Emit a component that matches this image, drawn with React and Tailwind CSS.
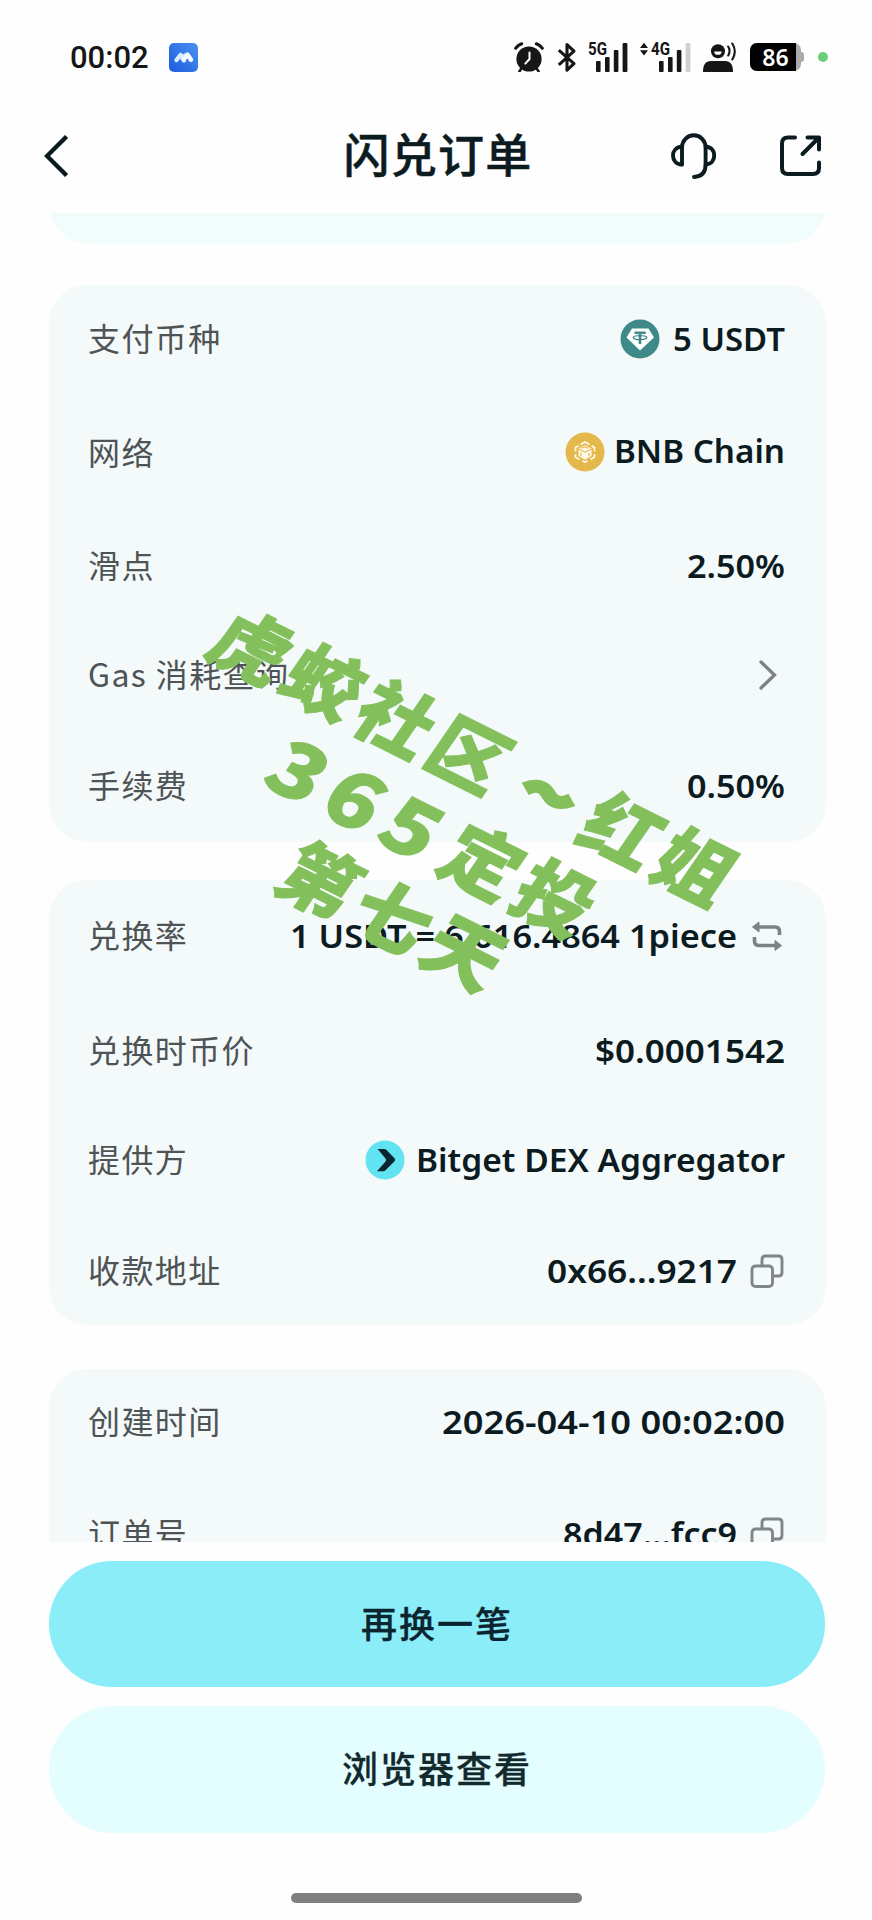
const LATIN = "font-['Noto_Sans','Noto_Sans_CJK_SC',sans-serif]";
const CJK = "font-['Noto_Sans_CJK_SC',sans-serif]";

function AlarmIcon() {
  return (
    <svg className="h-[30px] w-[30px]" viewBox="0 0 30 30" fill="none" stroke="#161616" strokeLinecap="round">
      <circle cx="15" cy="17" r="12.6" fill="#161616" stroke="none" />
      <path d="M1.8 6.2Q4 3 7.6 1.8M28.2 6.2Q26 3 22.4 1.8" strokeWidth="3.2" />
      <path d="M7 27l-1.6 2.4M23 27l1.6 2.4" strokeWidth="2.6" />
      <path d="M15.5 10.5V17l-4.2 4.6" stroke="#fff" strokeWidth="2" />
    </svg>
  );
}

function BluetoothIcon() {
  return (
    <svg className="h-[31px] w-[20px]" viewBox="0 0 20 31" fill="none" stroke="#161616" strokeWidth="3.1" strokeLinejoin="round">
      <path d="M1.8 8.2L17 21.6 10 28.2V2.6l7 6.6L1.8 22.8" />
    </svg>
  );
}

function SignalIcon({ label, arrows, weak }) {
  return (
    <svg className="h-[30px] w-[52px] overflow-visible" viewBox="0 0 52 30" fill="#161616">
      {arrows && <path d="M1 6L5 .8 9 6zM1 8.2h8L5 13.4z" />}
      <text x="12" y="13.4" fontSize="17.500" fontWeight="700" textLength="19" lengthAdjust="spacingAndGlyphs" className="font-['Roboto',sans-serif]">
        {label}
      </text>
      <rect x="20" y="19" width="4.6" height="11" rx="1" />
      <rect x="29" y="15" width="4.6" height="15" rx="1" />
      <rect x="37.8" y="8" width="4.6" height="22" rx="1" />
      <rect x="46.6" y="1" width="4.8" height="29" rx="1" fill={weak ? "#cfcfcf" : "#161616"} />
    </svg>
  );
}

function SpeakerIcon() {
  return (
    <svg className="h-[30px] w-[34px]" viewBox="0 0 34 30" fill="#161616">
      <circle cx="15" cy="9.2" r="7" />
      <path d="M11.2 9.4h7.4a3.7 3.4 0 0 1-7.4 0z" fill="#fff" />
      <path d="M0 30c0-7.600 2.500-11 8-11h14c5.500 0 8 3.400 8 11z" />
      <path d="M25.200 4.500q2.700 4.500 0 9M29.300 1.500q5 7.800 0 16" fill="none" stroke="#161616" strokeWidth="2.100" strokeLinecap="round" />
    </svg>
  );
}

function StatusBar() {
  return (
    <div className="flex h-[114px] items-center pl-[70px]">
      <span className="w-[99px] font-['Roboto',sans-serif] text-[31px] leading-none font-medium text-[#161616]">00:02</span>
      <svg className="h-[29px] w-[29px]" viewBox="0 0 29 29">
        <defs>
          <linearGradient id="appTile" x1="0" y1="1" x2="1" y2="0">
            <stop offset="0" stopColor="#1d5be0" />
            <stop offset="1" stopColor="#4a92ee" />
          </linearGradient>
        </defs>
        <rect width="29" height="29" rx="5" fill="url(#appTile)" />
        <path d="M7.500 17L11.500 12l3.500 5.500M13 14.500l5.500-3 3.500 5.500" fill="none" stroke="#dcebff" strokeWidth="4.400" strokeLinecap="round" strokeLinejoin="round" />
        <path d="M14.800 16.500l3.700-4.500 3.500 4.500" fill="none" stroke="#f6fbff" strokeWidth="4" strokeLinecap="round" strokeLinejoin="round" />
      </svg>
      <div className="ml-[316px] flex items-center">
        <AlarmIcon />
        <div className="ml-[13px]"><BluetoothIcon /></div>
        <div className="-ml-[1px]"><SignalIcon label="5G" /></div>
        <div className="ml-[11px]"><SignalIcon label="4G" arrows weak /></div>
        <div className="ml-[12px]"><SpeakerIcon /></div>
        <div className="ml-[13px] flex items-center">
          <div className="flex h-[28px] w-[51px] rounded-[7px] bg-[#aaaaaa]">
            <div className="flex h-full w-[46px] items-center justify-center rounded-l-[7px] bg-black pl-[5px] font-['Noto_Sans',sans-serif] text-[23px] leading-[28px] font-semibold text-white">86</div>
          </div>
          <div className="h-[10px] w-[3px] rounded-r-full bg-[#aaaaaa]" />
        </div>
        <div className="ml-[14px] h-[10px] w-[10px] rounded-full bg-[#69cf7c]" />
      </div>
    </div>
  );
}

function Header() {
  return (
    <div className="grid h-[99px] grid-cols-[1fr_auto_1fr] items-center pr-[50px] pb-[16px] pl-[44px]">
      <svg className="h-[42px] w-[25px]" viewBox="0 0 25 42" fill="none" stroke="#0c1b1f" strokeWidth="4.400">
        <path d="M22.600 1.500L3 21l19.600 19.500" />
      </svg>
      <h1 className={`${CJK} pb-[7px] pl-[10px] text-[46px] leading-none font-medium tracking-[1.300px] whitespace-nowrap text-[#0c1b1f] [-webkit-text-stroke:0.500px_#0c1b1f]`}>闪兑订单</h1>
      <div className="flex items-center justify-end gap-[64px]">
        <svg className="h-[46px] w-[45px]" viewBox="0 0 45 46" fill="none" stroke="#0c1b1f" strokeWidth="3.900" strokeLinecap="round" strokeLinejoin="round">
          <path d="M11 31.500V14.500a11.800 12.300 0 0 1 23.600 0v17q0 12-11.600 12.500" />
          <path d="M11 13.500c-6 .5-9 4.500-9 9s3 8.700 9 9M34.600 13.500c6 .5 8.600 4.500 8.600 9s-2.600 8.700-8.600 9" />
        </svg>
        <svg className="h-[42px] w-[42px]" viewBox="0 0 42 42" fill="none" stroke="#0c1b1f" strokeWidth="4" strokeLinecap="round" strokeLinejoin="round">
          <path d="M15 2.500H8Q2 2.500 2 8.500v24.600q0 6 6 6h25q6 0 6-6v-5.500M27.500 2.500h11.500v12M38 3.500L22.500 19" />
        </svg>
      </div>
    </div>
  );
}

function TetherIcon() {
  return (
    <svg className="h-[40px] w-[40px]" viewBox="0 0 40 40">
      <circle cx="20" cy="20" r="19.500" fill="#3d8a88" />
      <path d="M12 9.500h16.500L34 18.500 20 31.500 6.500 18.500z" fill="#fff" />
      <path d="M14.500 13.700h11.200M20 13.700V25" stroke="#3d8a88" strokeWidth="2.500" />
      <ellipse cx="20" cy="18.600" rx="6.800" ry="2" fill="none" stroke="#3d8a88" strokeWidth="1.300" />
    </svg>
  );
}

function BnbIcon() {
  return (
    <svg className="h-[40px] w-[40px]" viewBox="0 0 40 40">
      <circle cx="20" cy="20" r="19.500" fill="#e5b84c" />
      <g fill="none" stroke="#fffbe9" strokeWidth="1.700">
        <path d="M15.500 12.600L20 10l4.500 2.600M26.500 13.800l3 1.700v4M29.500 22v3l-4 2.400M22.500 28.800L20 30.300l-2.500-1.500M14.500 27.400l-4-2.400v-3M10.500 19.500v-4l3-1.700" />
      </g>
      <path d="M13.500 16.500L20 13l6.500 3.500v7.600L20 27.800l-6.500-3.700z" fill="#fffbe9" />
      <path d="M13.500 17l6.500 3.200 6.500-3.200M16.200 16.200l3.800-1.500 3.800 1.500M16 21v3.300M24 21v3.300" fill="none" stroke="#e5b84c" strokeWidth="1.200" />
    </svg>
  );
}

function BitgetIcon() {
  return (
    <svg className="h-[40px] w-[40px]" viewBox="0 0 40 40">
      <circle cx="20" cy="20" r="19.500" fill="#62e3f1" />
      <path d="M12.600 9h6.400q1.500 0 2.500 1l8 8.300q1.300 1.500 0 3L20.500 30.300q-1 .9-2.500.9h-6L20.500 21.500q1.300-1.500 0-3z" fill="#0a2530" />
    </svg>
  );
}

function CopyIcon() {
  return (
    <svg className="mr-[1px] h-[34px] w-[34px]" viewBox="0 0 34 34" fill="none" stroke="#808688" strokeWidth="2.900" strokeLinejoin="round">
      <rect x="2" y="12" width="20.500" height="20.500" rx="3.500" />
      <path d="M12 12V5.500Q12 2 15.500 2h13Q32 2 32 5.500v13q0 3.500-3.500 3.500h-6" />
    </svg>
  );
}

function SwapIcon() {
  return (
    <svg className="mr-[2px] h-[32px] w-[32px]" viewBox="0 0 32 32" fill="none" stroke="#7d8385" strokeWidth="3.600">
      <path d="M7 7h17q4.500 0 4.500 4.500v3.500M25 25.500H8q-4.500 0-4.500-4.500V17" />
      <path d="M1.500 7L8 2v10zM30.500 25.500L24 20.500v10z" fill="#7d8385" strokeWidth="1" strokeLinejoin="round" />
    </svg>
  );
}

function ChevronIcon() {
  return (
    <svg className="mr-[8px] h-[30px] w-[18px]" viewBox="0 0 18 30" fill="none" stroke="#7d8385" strokeWidth="3.300" strokeLinecap="round">
      <path d="M2 2l13.500 13L2 28" />
    </svg>
  );
}

function Value({ width, children }) {
  return (
    <svg className="h-[44px] overflow-visible" style={{ width }} fill="#0c1b1f">
      <text x="0" y="33.500" fontSize="32" fontWeight="600" textLength={width} lengthAdjust="spacingAndGlyphs" className={LATIN}>
        {children}
      </text>
    </svg>
  );
}

function Row({ label, className, children }) {
  return (
    <div className={`flex shrink-0 items-center justify-between ${className}`}>
      <span className={`${CJK} pb-[4px] text-[32px] leading-none tracking-[1.400px] whitespace-nowrap text-[#4e5355]`}>{label}</span>
      <div className="flex items-center">{children}</div>
    </div>
  );
}

function Card({ className, children }) {
  return <section className={`shrink-0 bg-[#f4f9fa] pr-[41px] pl-[39px] ${className}`}>{children}</section>;
}

function Watermark() {
  const line = "absolute flex items-center leading-none whitespace-pre origin-[0_50%] [transform:rotate(26.5deg)_skewX(-8deg)]";
  return (
    <div className={`${CJK} pointer-events-none absolute inset-0 text-[75px] font-black text-[#83c05c] [-webkit-text-stroke:1px_#83c05c]`}>
      <div className={`${line} top-[588px] left-[221px] h-[76px]`}>
        <span className="tracking-[6px]">虎蛟社区</span>
        <span className="flex w-[90px] justify-center [-webkit-text-stroke:4px_#83c05c]">
          <span className="scale-x-125">~</span>
        </span>
        <span className="tracking-[6px]">红姐</span>
      </div>
      <div className={`${line} top-[717px] left-[278px] h-[76px]`}>
        <span className="mr-[12px] w-[182px] origin-left scale-x-[1.120] text-[78px] tracking-[9px]">365</span>
        <span className="tracking-[6px]">定投</span>
      </div>
      <div className={`${line} top-[822px] left-[289px] h-[76px]`}>
        <span className="tracking-[6px]">第七天</span>
      </div>
    </div>
  );
}

export default function App() {
  return (
    <div className="relative flex h-[1920px] w-[872px] flex-col overflow-hidden bg-[#fefefe]">
      <StatusBar />
      <Header />
      <main className="flex h-[1329px] flex-col overflow-hidden pr-[46px] pl-[49px]">
        <div className="mb-[41px] flex h-[31px] shrink-0 flex-col justify-end overflow-hidden">
          <div className="h-[90px] shrink-0 rounded-[40px] bg-[#f1fcfd]" />
        </div>
        <Card className="mb-[38px] h-[557px] rounded-[38px]">
          <Row label="支付币种" className="h-[108px]">
            <TetherIcon />
            <div className="ml-[13px]"><Value width={112}>5 USDT</Value></div>
          </Row>
          <Row label="网络" className="h-[120px]">
            <div className="-mt-[3px]"><BnbIcon /></div>
            <div className="-mt-[5px] ml-[9px]"><Value width={171}>BNB Chain</Value></div>
          </Row>
          <Row label="滑点" className="h-[106px]"><Value width={98}>2.50%</Value></Row>
          <Row label="Gas 消耗查询" className="h-[112px]"><ChevronIcon /></Row>
          <Row label="手续费" className="h-[110px]"><Value width={98}>0.50%</Value></Row>
        </Card>
        <Card className="mb-[44px] h-[445px] rounded-[38px]">
          <Row label="兑换率" className="h-[112px]">
            <Value width={447}>1 USDT = 6,616.4864 1piece</Value>
            <div className="ml-[14px]"><SwapIcon /></div>
          </Row>
          <Row label="兑换时币价" className="h-[118px]"><Value width={190}>$0.0001542</Value></Row>
          <Row label="提供方" className="h-[99px]">
            <BitgetIcon />
            <div className="ml-[11px]"><Value width={369}>Bitget DEX Aggregator</Value></div>
          </Row>
          <Row label="收款地址" className="h-[115px] pt-[8px]">
            <Value width={190}>0x66...9217</Value>
            <div className="ml-[13px]"><CopyIcon /></div>
          </Row>
        </Card>
        <Card className="h-[223px] rounded-t-[38px]">
          <Row label="创建时间" className="h-[106px]"><Value width={343}>2026-04-10 00:02:00</Value></Row>
          <Row label="订单号" className="h-[117px]">
            <Value width={174}>8d47...fcc9</Value>
            <div className="ml-[13px]"><CopyIcon /></div>
          </Row>
        </Card>
      </main>
      <footer className={`${CJK} flex flex-col items-center pt-[19px] pr-[47px] pl-[49px] text-[36px] leading-none font-medium tracking-[2px]`}>
        <button className="h-[126px] w-full rounded-full bg-[#8aedf7] pb-[5px] text-[#0a2530] [-webkit-text-stroke:0.300px_#0a2530]">再换一笔</button>
        <button className="mt-[19px] h-[127px] w-full rounded-full bg-[#e4fdff] pb-[5px] text-[#12292d] [-webkit-text-stroke:0.300px_#12292d]">浏览器查看</button>
        <div className="mt-[60px] mr-[1px] h-[10px] w-[291px] rounded-full bg-[#7f7f7f]" />
      </footer>
      <Watermark />
    </div>
  );
}
